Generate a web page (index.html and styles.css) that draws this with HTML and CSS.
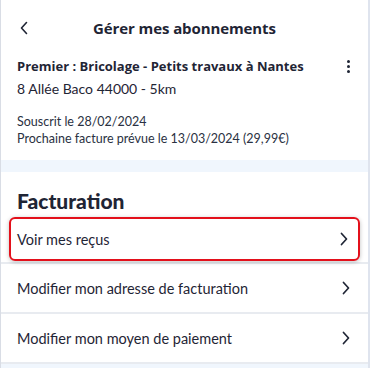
FILE: index.html
```html
<!DOCTYPE html>
<html lang="fr">
<head>
<meta charset="utf-8">
<link rel="stylesheet" href="styles.css">
</head>
<body>
<div class="page">
  <header class="topbar">
    <span class="back">
      <svg width="10" height="14" viewBox="0 0 10 14"><path d="M7.5 1.5 L2.5 7 L7.5 12.5" fill="none" stroke="#1f2535" stroke-width="1.6" stroke-linecap="round" stroke-linejoin="round"/></svg>
    </span>
    <h1 class="title">Gérer mes abonnements</h1>
  </header>
  <section class="sub">
    <div class="sub-head">
      <div class="sub-name">Premier : Bricolage - Petits travaux à Nantes</div>
      <span class="kebab"><i></i><i></i><i></i></span>
    </div>
    <div class="sub-addr">8 Allée Baco 44000 - 5km</div>
    <div class="sub-meta">
      <div>Souscrit le 28/02/2024</div>
      <div>Prochaine facture prévue le 13/03/2024 (29,99€)</div>
    </div>
  </section>
  <div class="stripe"></div>
  <section class="billing">
    <h2 class="section-title">Facturation</h2>
    <ul class="menu">
      <li class="row-wrap">
        <div class="row-active"><span>Voir mes reçus</span><svg class="chev" width="10" height="14" viewBox="0 0 10 14"><path d="M2.5 1.5 L7.5 7 L2.5 12.5" fill="none" stroke="#1f2535" stroke-width="1.7" stroke-linecap="round" stroke-linejoin="round"/></svg></div>
      </li>
      <li class="row"><span>Modifier mon adresse de facturation</span><svg class="chev" width="10" height="14" viewBox="0 0 10 14"><path d="M2.5 1.5 L7.5 7 L2.5 12.5" fill="none" stroke="#1f2535" stroke-width="1.7" stroke-linecap="round" stroke-linejoin="round"/></svg></li>
      <li class="row"><span>Modifier mon moyen de paiement</span><svg class="chev" width="10" height="14" viewBox="0 0 10 14"><path d="M2.5 1.5 L7.5 7 L2.5 12.5" fill="none" stroke="#1f2535" stroke-width="1.7" stroke-linecap="round" stroke-linejoin="round"/></svg></li>
    </ul>
  </section>
  <div class="stripe stripe-bottom"></div>
</div>
</body>
</html>
```
FILE: styles.css
```css
* { box-sizing: border-box; }
html, body { margin: 0; padding: 0; background: #fff; }
body {
  font-family: "Lato", "Noto Sans", sans-serif;
  color: #1f2535;
  width: 370px;
  height: 368px;
  overflow: hidden;
}
.page {
  width: 370px;
  height: 368px;
  overflow: hidden;
  border-left: 1px solid #d9dde5;
  border-right: 2px solid #dfe4ee;
}
.topbar {
  height: 56px;
  display: flex;
  align-items: center;
  position: relative;
  padding-left: 18px;
}
.back { display: flex; }
.title {
  margin: 0;
  position: absolute;
  left: 0; right: 0;
  text-align: center;
  font-family: "Open Sans", "Lato", sans-serif;
  font-size: 15px;
  font-weight: 700;
  letter-spacing: -0.1px;
  pointer-events: none;
}
.sub { padding: 0 16px; }
.sub-head { display: flex; justify-content: space-between; align-items: flex-start; }
.sub-name {
  font-family: "Open Sans", "Lato", sans-serif;
  font-size: 13px;
  font-weight: 700;
  line-height: 20px;
}
.kebab { display: flex; flex-direction: column; gap: 2px; padding: 4px 2px 0 0; }
.kebab i { width: 3px; height: 3px; border-radius: 50%; background: #1f2535; display: block; }
.sub-addr { font-size: 14px; line-height: 20px; margin-top: 3px; }
.sub-meta { font-size: 12.5px; line-height: 17px; margin-top: 14px; color: #2a3142; }
.stripe { height: 12px; background: #f0f6fd; margin-top: 13px; }
.section-title { margin: 0; padding: 16px 16px 0; font-size: 21px; font-weight: 900; line-height: 26px; }
.menu { list-style: none; margin: 0; padding: 0; }
.row-wrap {
  padding: 3px 8px 1px;
  border-bottom: 2px solid #e8ebf0;
}
.row-active {
  height: 44px;
  display: flex;
  align-items: center;
  justify-content: space-between;
  padding: 0 9px 0 6px;
  font-size: 14.5px;
  border: 2px solid #e3101b;
  border-radius: 6px;
  box-shadow: 0 1px 4px rgba(0,0,0,0.25);
}
.row {
  height: 50px;
  display: flex;
  align-items: center;
  justify-content: space-between;
  padding: 0 17px 0 16px;
  font-size: 14.5px;
  border-bottom: 2px solid #e8ebf0;
}
.chev { flex: none; }
.stripe-bottom { margin-top: 0; height: 8px; }
```
